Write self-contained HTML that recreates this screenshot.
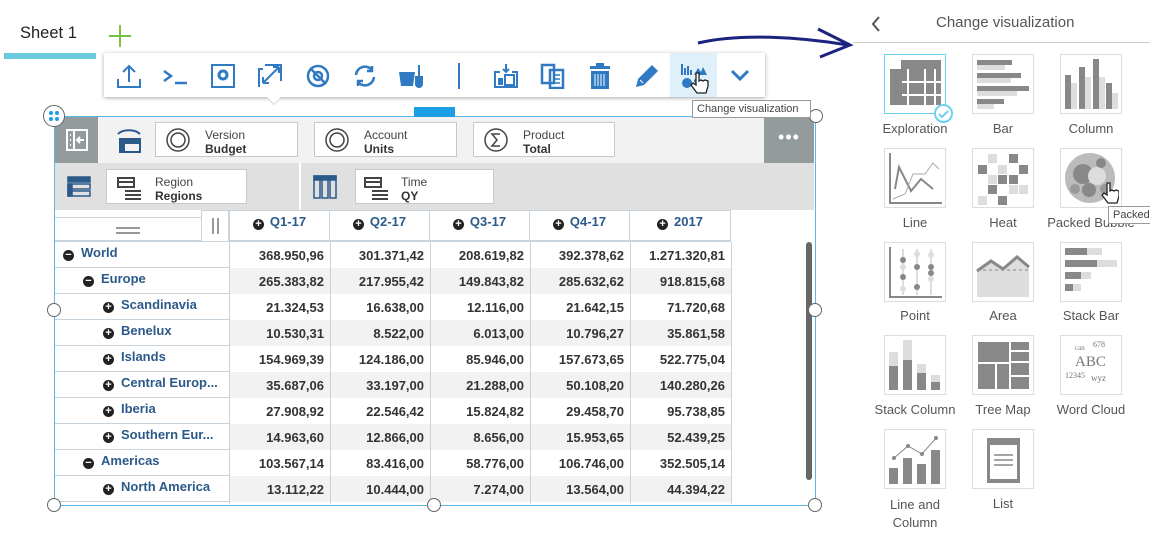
<!DOCTYPE html>
<html><head><meta charset="utf-8"><style>
*{margin:0;padding:0;box-sizing:border-box}
body{width:1150px;height:540px;background:#fff;position:relative;overflow:hidden;font-family:"Liberation Sans",sans-serif}
.a{position:absolute}
.tb svg{position:absolute;top:10px}
.fb{position:absolute;background:#fff;border:1px solid #c8c8c8;font-size:12px;color:#444;line-height:14px}
.fb b{color:#333}
.cell{position:absolute;font-size:13px;font-weight:bold;color:#333;text-align:right;height:26px;line-height:26px}
.rh{position:absolute;left:55px;width:174px;height:26px;border-bottom:1px solid #c9d3dc;font-size:13px;font-weight:bold;color:#2b5a8a;line-height:22px}
.rh i{display:inline-block;width:11px;height:11px;border-radius:50%;background:#222;color:#fff;font-style:normal;font-size:11px;line-height:11px;text-align:center;margin-right:7px;vertical-align:-1px}
.hd{position:absolute;top:210px;height:32px;border-right:1px solid #c9d3dc;border-bottom:2px solid #c9d3dc;font-size:13px;font-weight:bold;color:#2b5a8a;text-align:center;line-height:24px}
.hd i{display:inline-block;width:11px;height:11px;border-radius:50%;background:#222;color:#fff;font-style:normal;font-size:11px;line-height:11px;text-align:center;margin-right:6px;vertical-align:-1px}
.h{position:absolute;width:14px;height:14px;border-radius:50%;background:#fff;border:1px solid #666}
.tile{position:absolute;width:62px;height:60px;border:1px solid #ddd;background:#fff}
.lab{position:absolute;width:100px;text-align:center;font-size:13px;color:#555}
</style></head><body>
<div class="a" style="left:20px;top:24px;font-size:16.5px;color:#222">Sheet 1</div>
<div class="a" style="left:4px;top:53px;width:92px;height:6px;background:#6cc8dc"></div>
<div class="a" style="left:119px;top:25px;width:2px;height:22px;background:#7ac143"></div>
<div class="a" style="left:109px;top:35px;width:22px;height:2px;background:#7ac143"></div>
<svg class="a" style="left:690px;top:25px" width="165" height="40"><path d="M8 18 C50 8 110 12 158 20" stroke="#1a237e" stroke-width="3" fill="none"/><path d="M128 4 L160 20 L130 32" stroke="#1a237e" stroke-width="3" fill="none"/></svg>

<div class="a tb" style="left:104px;top:53px;width:661px;height:44px;background:#fff;box-shadow:0 1px 4px rgba(0,0,0,.35)">
<div class="a" style="left:566px;top:0;width:47px;height:44px;background:#dff0fa"></div>
<svg style="left:12px" width="26" height="26" fill="none" stroke="#2f7ac2" stroke-width="2"><path d="M2 16v8h22v-8M13 19V3M7 9l6-6 6 6"/></svg>
<svg style="left:58px" width="26" height="26" fill="none" stroke="#2f7ac2" stroke-width="2.5"><path d="M2 8l7 5-7 5M13 20h12"/></svg>
<svg style="left:106px" width="26" height="26" fill="none" stroke="#2f7ac2" stroke-width="2"><rect x="2" y="2" width="22" height="22"/><circle cx="13" cy="12" r="4" stroke-width="3"/></svg>
<svg style="left:153px" width="26" height="26" fill="none" stroke="#2f7ac2" stroke-width="2"><path d="M2 24V6h4M8 2h16v16M6 20L22 4M6 20h6M6 20v-6M22 4h-6M22 4v6"/></svg>
<svg style="left:201px" width="26" height="26" fill="none" stroke="#2f7ac2" stroke-width="2.5"><circle cx="13" cy="13" r="10"/><circle cx="13" cy="13" r="4"/><path d="M5 5l16 16"/></svg>
<svg style="left:248px" width="26" height="26" fill="none" stroke="#2f7ac2" stroke-width="2.5"><path d="M4 12a9 9 0 0 1 16-5M22 14a9 9 0 0 1-16 5M20 3v5h-5M6 23v-5h5"/></svg>
<svg style="left:294px" width="28" height="26" fill="#2f7ac2"><path d="M1 9h16l-2 14H3z"/><rect x="20" y="2" width="2" height="12"/><path d="M17 13h8v8a4 4 0 0 1-8 0z"/></svg>
<div class="a" style="left:354px;top:10px;width:2px;height:26px;background:#2f7ac2"></div>
<svg style="left:389px" width="26" height="26" fill="#2f7ac2"><path d="M1 8h6v2H3v13h20V10h-4V8h6v17H1z"/><rect x="5" y="15" width="5" height="7"/><rect x="12" y="12" width="9" height="10" fill="none" stroke="#2f7ac2" stroke-width="2"/><path d="M13 1v8M10 6l3 3 3-3" stroke="#2f7ac2" stroke-width="2" fill="none"/></svg>
<svg style="left:436px" width="26" height="26" fill="none" stroke="#2f7ac2" stroke-width="2.5"><path d="M2 2h12v18H2zM10 7h13v18H10z"/><path d="M14 12h6M14 16h6M14 20h6" stroke-width="1.5"/></svg>
<svg style="left:483px" width="26" height="26" fill="#2f7ac2"><rect x="3" y="3" width="20" height="3"/><rect x="9" y="0" width="8" height="3"/><path d="M4 8h18v18H4z"/><path d="M8 11v12M11 11v12M14 11v12M17 11v12" stroke="#fff" stroke-width="1"/></svg>
<svg style="left:530px" width="26" height="26" fill="#2f7ac2"><path d="M2 24l2-8L18 2l6 6L10 22z"/><path d="M6 17l3 3" stroke="#fff"/></svg>
<svg style="left:576px" width="28" height="28" fill="#2f7ac2"><rect x="1" y="1" width="2" height="11"/><rect x="4" y="5" width="2" height="7"/><rect x="7" y="3" width="2" height="9"/><rect x="10" y="7" width="2" height="5"/><path d="M14 12l4-7 3 4 2-5 4 8z"/><circle cx="7" cy="20" r="5"/><circle cx="16" cy="18" r="2"/><circle cx="21" cy="20" r="2"/><circle cx="17" cy="23" r="2"/></svg>
<svg style="left:586px;top:18px" width="20" height="24"><path d="M6 2v12l-3-2-2 2 6 8h9l2-7v-5l-3-1-2 1-2-1-2 1V2z" fill="#fff" stroke="#222" stroke-width="1.3"/></svg>
<svg style="left:626px;top:15px" width="20" height="14" fill="none" stroke="#2f7ac2" stroke-width="3"><path d="M2 3l8 8 8-8"/></svg>
</div>
<div class="a" style="left:266px;top:96px;width:0;height:0;border-left:8px solid transparent;border-right:8px solid transparent;border-top:8px solid #fff;filter:drop-shadow(0 1px 0 #ccc)"></div>
<div class="a" style="left:692px;top:100px;width:119px;height:18px;background:#fff;border:1px solid #999;font-size:11px;color:#444;line-height:16px;padding-left:4px;z-index:5">Change visualization</div>

<div class="a" style="left:54px;top:116px;width:762px;height:390px;border:1px solid #5bb6e6"></div>
<div class="a" style="left:414px;top:107px;width:41px;height:11px;background:#1c9ee2"></div>
<div class="a" style="left:55px;top:117px;width:759px;height:46px;background:#f2f2f2"></div>
<div class="a" style="left:55px;top:117px;width:43px;height:46px;background:#949b9c"></div>
<svg class="a" style="left:66px;top:129px" width="22" height="22" fill="none" stroke="#fff" stroke-width="2"><rect x="1" y="1" width="20" height="20"/><path d="M8 1v20M4 6h1M4 11h1M4 16h1M18 11h-7M14 8l-3 3 3 3"/></svg>
<svg class="a" style="left:116px;top:127px" width="26" height="26" fill="none" stroke="#2b5a8a" stroke-width="2"><path d="M2 7a13 8 0 0 1 22 0"/><rect x="4" y="12" width="20" height="13" stroke="#2b5a8a"/><rect x="4" y="12" width="20" height="4" fill="#2b5a8a"/><rect x="4" y="16" width="4" height="9" fill="#2b5a8a"/></svg>
<div class="a" style="left:764px;top:117px;width:50px;height:46px;background:#949b9c;color:#fff;font-size:18px;text-align:center;line-height:40px;letter-spacing:1px">•••</div>
<div class="fb" style="left:155px;top:122px;width:143px;height:35px"><svg class="a" style="left:9px;top:4px" width="26" height="26" fill="none" stroke="#444" stroke-width="1.5"><circle cx="13" cy="13" r="11"/><circle cx="13" cy="13" r="7"/></svg><div class="a" style="left:49px;top:5px">Version<br><b>Budget</b></div></div>
<div class="fb" style="left:314px;top:122px;width:143px;height:35px"><svg class="a" style="left:9px;top:4px" width="26" height="26" fill="none" stroke="#444" stroke-width="1.5"><circle cx="13" cy="13" r="11"/><circle cx="13" cy="13" r="7"/></svg><div class="a" style="left:49px;top:5px">Account<br><b>Units</b></div></div>
<div class="fb" style="left:473px;top:122px;width:142px;height:35px"><svg class="a" style="left:9px;top:4px" width="26" height="26" fill="none" stroke="#444" stroke-width="1.5"><circle cx="13" cy="13" r="11"/><path d="M17 7h-8l5 6-5 6h8"/></svg><div class="a" style="left:49px;top:5px">Product<br><b>Total</b></div></div>

<div class="a" style="left:55px;top:163px;width:759px;height:47px;background:#e0e0e0"></div>
<div class="a" style="left:299px;top:163px;width:2px;height:47px;background:#fff"></div>
<svg class="a" style="left:67px;top:176px" width="24" height="22" fill="none" stroke="#2b5a8a" stroke-width="1.5"><rect x="1" y="1" width="22" height="5" fill="#2b5a8a"/><rect x="1" y="8" width="22" height="5"/><rect x="1" y="15" width="22" height="5"/><rect x="1" y="8" width="4" height="12" fill="#2b5a8a"/></svg>
<svg class="a" style="left:313px;top:175px" width="24" height="24" fill="none" stroke="#2b5a8a" stroke-width="1.5"><rect x="1" y="1" width="6" height="22"/><rect x="9" y="1" width="6" height="22"/><rect x="17" y="1" width="6" height="22"/><rect x="1" y="1" width="22" height="4" fill="#2b5a8a"/></svg>
<div class="fb" style="left:106px;top:169px;width:141px;height:35px"><svg class="a" style="left:10px;top:7px" width="26" height="24" fill="none" stroke="#444" stroke-width="2"><rect x="1" y="1" width="16" height="9"/><path d="M1 5h16M8 14h16M8 18h16M8 22h16"/></svg><div class="a" style="left:48px;top:5px">Region<br><b>Regions</b></div></div>
<div class="fb" style="left:355px;top:169px;width:139px;height:35px"><svg class="a" style="left:8px;top:7px" width="26" height="24" fill="none" stroke="#444" stroke-width="2"><rect x="1" y="1" width="16" height="9"/><path d="M1 5h16M8 14h16M8 18h16M8 22h16"/></svg><div class="a" style="left:45px;top:5px">Time<br><b>QY</b></div></div>

<div class="a" style="left:55px;top:217px;width:146px;height:25px;border-top:1px solid #c9d3dc;border-bottom:2px solid #c9d3dc"></div>
<div class="a" style="left:116px;top:227px;width:24px;height:2px;background:#999"></div>
<div class="a" style="left:116px;top:232px;width:24px;height:2px;background:#999"></div>
<div class="a" style="left:201px;top:210px;width:28px;height:32px;border:1px solid #c9d3dc;background:#fff"></div>
<div class="a" style="left:212px;top:218px;width:2px;height:16px;background:#999"></div>
<div class="a" style="left:217px;top:218px;width:2px;height:16px;background:#999"></div>
<div class="a" style="left:229px;top:210px;width:502px;height:1px;background:#c9d3dc"></div>
<div class="hd" style="left:229px;width:101px;border-left:1px solid #c9d3dc"><i>+</i>Q1-17</div>
<div class="hd" style="left:330px;width:100px"><i>+</i>Q2-17</div>
<div class="hd" style="left:430px;width:100px"><i>+</i>Q3-17</div>
<div class="hd" style="left:530px;width:100px"><i>+</i>Q4-17</div>
<div class="hd" style="left:630px;width:101px"><i>+</i>2017</div>

<div id="rows"></div>
<script>
var names=[["World",0,"−"],["Europe",1,"−"],["Scandinavia",2,"+"],["Benelux",2,"+"],["Islands",2,"+"],["Central Europ...",2,"+"],["Iberia",2,"+"],["Southern Eur...",2,"+"],["Americas",1,"−"],["North America",2,"+"]];
var d=[["368.950,96","301.371,42","208.619,82","392.378,62","1.271.320,81"],["265.383,82","217.955,42","149.843,82","285.632,62","918.815,68"],["21.324,53","16.638,00","12.116,00","21.642,15","71.720,68"],["10.530,31","8.522,00","6.013,00","10.796,27","35.861,58"],["154.969,39","124.186,00","85.946,00","157.673,65","522.775,04"],["35.687,06","33.197,00","21.288,00","50.108,20","140.280,26"],["27.908,92","22.546,42","15.824,82","29.458,70","95.738,85"],["14.963,60","12.866,00","8.656,00","15.953,65","52.439,25"],["103.567,14","83.416,00","58.776,00","106.746,00","352.505,14"],["13.112,22","10.444,00","7.274,00","13.564,00","44.394,22"]];
var xs=[229,330,430,530,630,731],h="";
for(var r=0;r<10;r++){var y=242+r*26;
h+='<div class="rh" style="top:'+y+'px;padding-left:'+(8+names[r][1]*20)+'px"><i>'+names[r][2]+'</i>'+names[r][0]+'</div>';
if(r%2)h+='<div class="a" style="left:229px;top:'+y+'px;width:502px;height:26px;background:#f2f2f2"></div>';
for(var c=0;c<5;c++)h+='<div class="cell" style="left:'+xs[c]+'px;top:'+(y+1)+'px;width:'+(xs[c+1]-xs[c]-6)+'px">'+d[r][c]+'</div>';}
for(var c=0;c<6;c++)h+='<div class="a" style="left:'+xs[c]+'px;top:242px;width:1px;height:262px;background:#c9d3dc"></div>';
document.getElementById("rows").innerHTML=h;
</script>
<div class="a" style="left:806px;top:242px;width:6px;height:238px;background:#666;border-radius:3px"></div>

<div class="h" style="left:809px;top:109px"></div>
<div class="h" style="left:47px;top:303px"></div><div class="h" style="left:808px;top:303px"></div>
<div class="h" style="left:47px;top:498px"></div><div class="h" style="left:427px;top:498px"></div><div class="h" style="left:808px;top:498px"></div>
<div class="a" style="left:43px;top:105px;width:22px;height:22px;border-radius:50%;background:#fff;border:1px solid #666"></div>
<svg class="a" style="left:47px;top:109px" width="14" height="14" fill="#1c9ee2"><circle cx="4" cy="4" r="2"/><circle cx="10" cy="4" r="2"/><circle cx="4" cy="10" r="2"/><circle cx="10" cy="10" r="2"/></svg>

<svg class="a" style="left:870px;top:15px" width="12" height="18" fill="none" stroke="#555" stroke-width="2"><path d="M9 2L3 9l6 7"/></svg>
<div class="a" style="left:936px;top:14px;font-size:15px;color:#555">Change visualization</div>
<div class="a" style="left:853px;top:42px;width:297px;height:1px;background:#ccc"></div>

<div class="tile" style="left:884px;top:54px;border-color:#6cd0ee"><svg width="60" height="58"><rect x="16" y="5" width="40" height="9" fill="#888"/><rect x="5" y="14" width="12" height="36" fill="#888"/><rect x="17" y="14" width="39" height="36" fill="#888"/><path d="M17 27h39M17 40h39M23 14v36M40 14v36M50 14v36" stroke="#fff" stroke-width="2"/><rect x="24" y="28" width="15" height="11" fill="#888"/></svg></div>
<div class="a" style="left:934px;top:104px;width:19px;height:19px;border-radius:50%;background:#fff;border:2px solid #6cd0ee"></div>
<svg class="a" style="left:938px;top:109px" width="12" height="10" fill="none" stroke="#6cd0ee" stroke-width="2"><path d="M1 5l3 3 6-6"/></svg>
<div class="tile" style="left:972px;top:54px"><svg width="60" height="58"><rect x="4" y="5" width="35" height="5" fill="#888"/><rect x="4" y="10" width="28" height="5" fill="#ddd"/><rect x="4" y="18" width="44" height="5" fill="#888"/><rect x="4" y="23" width="34" height="5" fill="#ddd"/><rect x="4" y="31" width="52" height="5" fill="#888"/><rect x="4" y="36" width="40" height="5" fill="#ddd"/><rect x="4" y="44" width="27" height="5" fill="#888"/><rect x="4" y="49" width="17" height="5" fill="#ddd"/></svg></div>
<div class="tile" style="left:1060px;top:54px"><svg width="60" height="58"><rect x="4" y="20" width="6" height="34" fill="#888"/><rect x="10" y="28" width="6" height="26" fill="#ddd"/><rect x="18" y="12" width="6" height="42" fill="#888"/><rect x="24" y="22" width="6" height="32" fill="#ddd"/><rect x="32" y="4" width="6" height="50" fill="#888"/><rect x="38" y="22" width="6" height="32" fill="#ddd"/><rect x="45" y="28" width="6" height="26" fill="#888"/><rect x="51" y="38" width="6" height="16" fill="#ddd"/></svg></div>
<div class="tile" style="left:884px;top:148px"><svg width="60" height="58" fill="none"><path d="M5 4v50h52" stroke="#888" stroke-width="2"/><path d="M10 40L14 18 26 42 36 30 48 40" stroke="#888" stroke-width="2"/><path d="M8 50L20 45 28 25 40 25 48 14 54 20" stroke="#aaa"/></svg></div>
<div class="tile" style="left:972px;top:148px"><svg width="60" height="58"><g fill="#888"><rect x="5" y="16" width="9" height="9"/><rect x="36" y="5" width="9" height="9"/><rect x="46" y="16" width="9" height="9"/><rect x="25" y="26" width="9" height="9"/><rect x="36" y="26" width="9" height="9"/><rect x="15" y="36" width="9" height="9"/><rect x="25" y="47" width="9" height="9"/></g><g fill="#ddd"><rect x="15" y="5" width="9" height="9"/><rect x="25" y="16" width="9" height="9"/><rect x="15" y="26" width="9" height="9"/><rect x="36" y="36" width="9" height="9"/><rect x="46" y="36" width="9" height="9"/><rect x="5" y="47" width="9" height="9"/></g></svg></div>
<div class="tile" style="left:1060px;top:148px"><svg width="60" height="58"><circle cx="29" cy="29" r="25" fill="#bbb"/><circle cx="22" cy="25" r="10" fill="#888"/><circle cx="36" cy="27" r="9" fill="#ddd"/><circle cx="28" cy="41" r="7" fill="#888"/><circle cx="14" cy="40" r="5" fill="#999"/><circle cx="40" cy="14" r="5" fill="#888"/><circle cx="44" cy="40" r="5" fill="#999"/></svg></div>
<div class="lab" style="left:1041px;top:215px">Packed Bubble</div>
<svg class="a" style="left:1101px;top:181px" width="18" height="24"><path d="M6 2v12l-3-2-2 2 6 8h9l2-7v-5l-3-1-2 1-2-1-2 1V2z" fill="#fff" stroke="#222" stroke-width="1.3"/></svg>
<div class="a" style="left:1108px;top:206px;width:44px;height:18px;background:#fff;border:1px solid #999;font-size:11px;color:#444;padding-left:4px;line-height:16px">Packed</div>
<div class="tile" style="left:884px;top:242px"><svg width="60" height="58"><path d="M5 4v50h52" stroke="#888" stroke-width="2" fill="none"/><path d="M18 6v46M32 6v46M46 6v46" stroke="#ddd" stroke-width="2"/><g fill="#888"><circle cx="18" cy="17" r="3"/><circle cx="18" cy="34" r="3"/><circle cx="32" cy="24" r="3"/><circle cx="32" cy="44" r="3"/><circle cx="46" cy="24" r="3"/><circle cx="46" cy="30" r="3"/></g><g fill="#ddd"><circle cx="18" cy="24" r="3"/><circle cx="18" cy="46" r="3"/><circle cx="32" cy="11" r="3"/><circle cx="46" cy="12" r="3"/><circle cx="46" cy="36" r="3"/></g></svg></div>
<div class="tile" style="left:972px;top:242px"><svg width="60" height="58"><path d="M4 28L18 18 30 26 44 14 56 24V54H4z" fill="#ddd"/><path d="M4 28L18 18 30 26 44 14 56 24" stroke="#888" stroke-width="3" fill="none"/><path d="M4 27h52" stroke="#888" stroke-dasharray="3 3"/></svg></div>
<div class="tile" style="left:1060px;top:242px"><svg width="60" height="58"><rect x="4" y="5" width="22" height="7" fill="#888"/><rect x="26" y="5" width="15" height="7" fill="#ddd"/><rect x="4" y="17" width="32" height="7" fill="#888"/><rect x="36" y="17" width="20" height="7" fill="#ddd"/><rect x="4" y="29" width="16" height="7" fill="#888"/><rect x="20" y="29" width="10" height="7" fill="#ddd"/><rect x="4" y="41" width="8" height="7" fill="#888"/><rect x="12" y="41" width="8" height="7" fill="#ddd"/></svg></div>
<div class="tile" style="left:884px;top:335px"><svg width="60" height="58"><rect x="4" y="16" width="9" height="14" fill="#ddd"/><rect x="4" y="30" width="9" height="24" fill="#888"/><rect x="18" y="4" width="9" height="20" fill="#ddd"/><rect x="18" y="24" width="9" height="30" fill="#888"/><rect x="32" y="28" width="9" height="9" fill="#ddd"/><rect x="32" y="37" width="9" height="17" fill="#888"/><rect x="46" y="39" width="9" height="7" fill="#ddd"/><rect x="46" y="46" width="9" height="8" fill="#888"/></svg></div>
<div class="tile" style="left:972px;top:335px"><svg width="60" height="58" fill="#888"><rect x="5" y="6" width="31" height="20"/><rect x="5" y="28" width="17" height="25"/><rect x="24" y="28" width="12" height="25"/><rect x="38" y="6" width="18" height="8"/><rect x="38" y="16" width="18" height="9"/><rect x="38" y="27" width="18" height="12"/><rect x="38" y="41" width="18" height="12"/></svg></div>
<div class="tile" style="left:1060px;top:335px"><svg width="60" height="58" font-family="Liberation Serif" fill="#777"><text x="14" y="14" font-size="7">can</text><text x="32" y="11" font-size="8">678</text><text x="14" y="30" font-size="15">ABC</text><text x="4" y="42" font-size="8">12345</text><text x="30" y="45" font-size="9">wyz</text></svg></div>
<div class="tile" style="left:884px;top:429px"><svg width="60" height="58"><rect x="4" y="38" width="9" height="16" fill="#888"/><rect x="18" y="28" width="9" height="26" fill="#888"/><rect x="32" y="34" width="9" height="20" fill="#888"/><rect x="46" y="20" width="9" height="34" fill="#888"/><path d="M9 28L23 16 37 24 51 8" stroke="#888" fill="none"/><g fill="#888"><circle cx="9" cy="28" r="2"/><circle cx="23" cy="16" r="2"/><circle cx="37" cy="24" r="2"/><circle cx="51" cy="8" r="2"/></g></svg></div>
<div class="tile" style="left:972px;top:429px"><svg width="60" height="58"><rect x="14" y="8" width="33" height="45" fill="#888"/><rect x="17" y="15" width="27" height="34" fill="#fff"/><path d="M21 25h19M21 30h19M21 35h19" stroke="#888" stroke-width="1.5"/></svg></div>

<div class="lab" style="left:865px;top:121px">Exploration</div>
<div class="lab" style="left:953px;top:121px">Bar</div>
<div class="lab" style="left:1041px;top:121px">Column</div>
<div class="lab" style="left:865px;top:215px">Line</div>
<div class="lab" style="left:953px;top:215px">Heat</div>
<div class="lab" style="left:865px;top:308px">Point</div>
<div class="lab" style="left:953px;top:308px">Area</div>
<div class="lab" style="left:1041px;top:308px">Stack Bar</div>
<div class="lab" style="left:865px;top:402px">Stack Column</div>
<div class="lab" style="left:953px;top:402px">Tree Map</div>
<div class="lab" style="left:1041px;top:402px">Word Cloud</div>
<div class="lab" style="left:865px;top:496px;line-height:18px">Line and<br>Column</div>
<div class="lab" style="left:953px;top:496px">List</div>
</body></html>
